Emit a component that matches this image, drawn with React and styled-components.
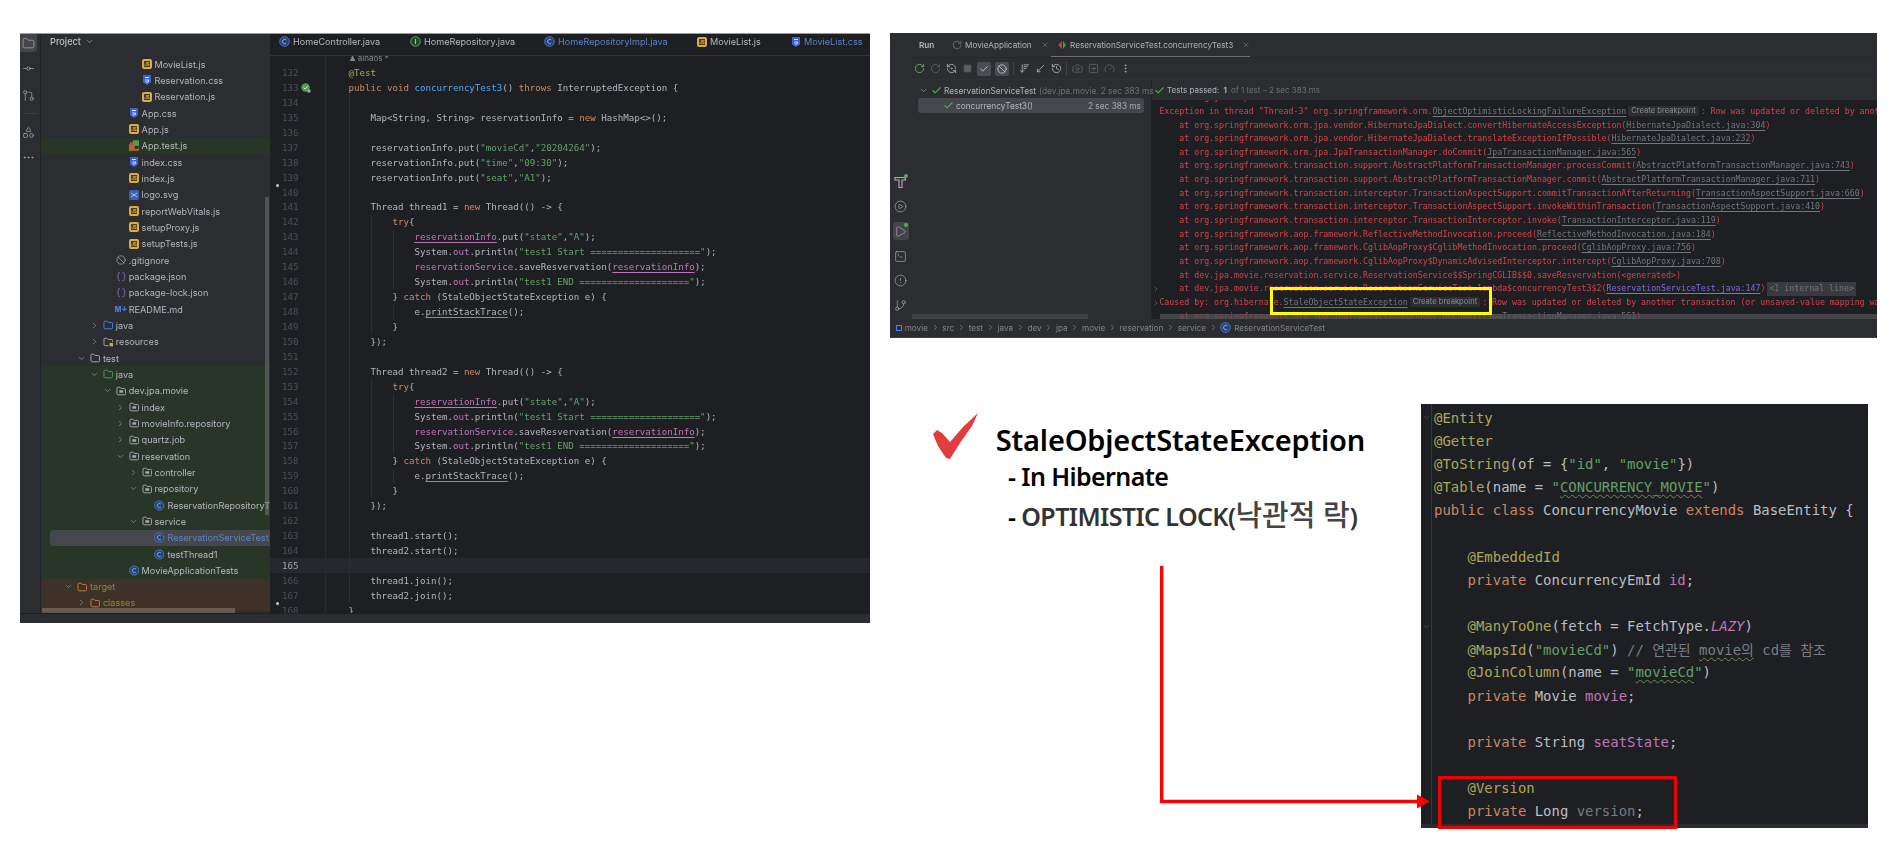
import React from "react";
import styled, { createGlobalStyle } from "styled-components";
import {
  Folder,
  GitCommitHorizontal,
  GitPullRequest,
  Shapes,
  Ellipsis,
  ChevronDown,
  ChevronRight,
  Ban,
  Braces,
  RotateCw,
  RefreshCcwDot,
  Check,
  Square,
  ArrowDownWideNarrow,
  MoveDownLeft,
  History,
  Camera,
  SquareArrowRight,
  Gauge,
  EllipsisVertical,
  CirclePlay,
  Play,
  SquareTerminal,
  CircleAlert,
  GitBranch,
  X,
} from "lucide-react";

const UI = `Inter, "Noto Sans", sans-serif`;
const MONO = `"DejaVu Sans Mono", "Noto Sans CJK KR", monospace`;

const GlobalStyle = createGlobalStyle`
  html, body {
    margin: 0;
    background: #fff;
    overflow: hidden;
  }
`;

const Page = styled.div`
  width: 1892px;
  height: 844px;
  box-sizing: border-box;
  padding: 33px 0 0 20px;
  display: flex;
  gap: 20px;
  align-items: flex-start;
  overflow: hidden;
  background: #fff;
`;

/* ---------- left screenshot ---------- */

const LeftShot = styled.div`
  width: 850px;
  height: 590px;
  display: flex;
  flex-direction: column;
  background: #2b2d30;
  border-top: 1px solid #9a9b9d;
  box-sizing: border-box;
  filter: blur(0.4px);
  font-family: ${UI};
  overflow: hidden;
`;

const LeftBody = styled.div`
  flex: 1;
  min-height: 0;
  display: flex;
`;

const LeftStatus = styled.div`
  height: 9px;
  background: #2b2d30;
  border-top: 1px solid #1e1f22;
`;

const ActivityBar = styled.div`
  width: 20px;
  border-right: 1px solid #232427;
  display: flex;
  flex-direction: column;
  align-items: center;
  color: #b4b6bc;
  svg {
    display: block;
  }
`;

const ActivityButton = styled.div`
  width: 17px;
  height: ${(p) => p.$h || 17}px;
  margin-bottom: ${(p) => p.$mb || 0}px;
  margin-right: 3px;
  display: flex;
  align-items: center;
  justify-content: center;
  border-radius: 0 0 4px 0;
  background: ${(p) => (p.$active ? "#43454a" : "transparent")};
`;

const ActivityRule = styled.div`
  width: 14px;
  height: 1px;
  background: #3c3e42;
  margin-bottom: 10px;
`;

const ProjectPanel = styled.div`
  position: relative;
  width: 229px;
  display: flex;
  flex-direction: column;
  overflow: hidden;
  background: #2b2d30;
`;

const PanelHeader = styled.div`
  height: 15px;
  padding-bottom: 7px;
  flex: none;
  padding-left: 9px;
  display: flex;
  align-items: center;
  gap: 4px;
  font-size: 9.2px;
  font-weight: 500;
  color: #bfc1c6;
`;

const TreeRow = styled.div`
  height: 16.33px;
  flex: none;
  display: flex;
  align-items: center;
  box-sizing: border-box;
  padding-left: ${(p) => 23 + p.$level * 12.9}px;
  background: ${(p) =>
    p.$tone === "green" ? "#283628" : p.$tone === "brown" ? "#3e3228" : "transparent"};
  white-space: nowrap;
  position: relative;
`;

const RowSelect = styled.div`
  position: absolute;
  left: 9px;
  right: 0;
  top: 0;
  bottom: 0;
  border-radius: 4px 0 0 4px;
  background: #45474c;
`;

const TreeChevron = styled.span`
  position: relative;
  width: 13px;
  flex: none;
  display: flex;
  color: #8d8f95;
`;

const TreeIconBox = styled.span`
  position: relative;
  width: 10.5px;
  height: 11px;
  flex: none;
  margin-right: 2.5px;
  display: flex;
  align-items: center;
  justify-content: center;
`;

const TreeLabel = styled.span`
  position: relative;
  font-size: 9.15px;
  color: ${(p) => p.$color || "#b6b8be"};
`;

const VScroll = styled.div`
  position: absolute;
  right: 1px;
  top: 163px;
  height: 318px;
  width: 4px;
  background: rgba(120, 122, 126, 0.5);
`;

const HScroll = styled.div`
  position: absolute;
  left: 1px;
  bottom: 0;
  width: 193px;
  height: 5px;
  background: rgba(150, 145, 130, 0.45);
`;

const Editor = styled.div`
  position: relative;
  flex: 1;
  min-width: 0;
  display: flex;
  flex-direction: column;
  background: #1e1f22;
`;

const TabBar = styled.div`
  height: 21px;
  flex: none;
  position: relative;
  border-bottom: 1px solid #313338;
`;

const EditorTab = styled.div`
  position: absolute;
  top: 0;
  height: 15px;
  left: ${(p) => p.$x}px;
  display: flex;
  align-items: center;
  gap: 3px;
  font-size: 9.1px;
  white-space: nowrap;
  color: ${(p) => p.$color || "#b6b8be"};
`;

const CodeClip = styled.div`
  flex: 1;
  min-height: 0;
  overflow: hidden;
`;

const CodeList = styled.div`
  margin-top: -5.4px;
  font-family: ${MONO};
  font-size: 9.15px;
  color: #b4b6bc;
`;

const CodeRow = styled.div`
  height: 14.94px;
  display: flex;
  align-items: center;
  background: ${(p) => (p.$current ? "#26282d" : "transparent")};
`;

const LineNo = styled.div`
  width: 56px;
  height: 100%;
  flex: none;
  box-sizing: border-box;
  padding-left: 12px;
  display: flex;
  align-items: center;
  gap: 3px;
  border-right: 1px solid #2a2b2f;
  color: ${(p) => (p.$current ? "#a1a3ab" : "#4b5059")};
`;

const LineCode = styled.div`
  flex: 1;
  height: 100%;
  display: flex;
  align-items: center;
  padding-left: 22.5px;
  white-space: pre;
  background-image: repeating-linear-gradient(
    90deg,
    #2c2d31 0,
    #2c2d31 1px,
    transparent 1px,
    transparent 22.04px
  );
  background-repeat: no-repeat;
  background-position: 22.5px 0;
  background-size: ${(p) => (p.$depth || 0) * 22.04}px 100%;
`;

const Tok = styled.span`
  color: ${(p) =>
    ({
      k: "#c9886a",
      s: "#63a06c",
      a: "#ada85c",
      f: "#c077b5",
      m: "#56a8f5",
      h: "#85878d",
      d: "#7a7e85",
      v: "#787a80",
      p: "#b4b6bc",
    })[p.$k]};
  font-style: ${(p) => (p.$italic ? "italic" : "normal")};
  font-family: ${(p) => (p.$k === "h" ? UI : "inherit")};
  font-size: ${(p) => (p.$k === "h" ? "8px" : "inherit")};
  text-decoration: ${(p) => (p.$line ? `underline ${p.$line}` : "none")};
  text-underline-offset: 2px;
`;

const Wavy = styled.span`
  text-decoration: underline wavy #6e8a4e 1px;
  text-underline-offset: 2px;
  color: ${(p) => p.$color || "inherit"};
`;

const GutterDot = styled.div`
  position: absolute;
  left: 6px;
  top: ${(p) => p.$y}px;
  width: 3px;
  height: 3px;
  border-radius: 50%;
  background: #c8c9cc;
`;

/* ---------- right column ---------- */

const RightColumn = styled.div`
  width: 987px;
  display: flex;
  flex-direction: column;
  gap: 66px;
`;

const RunShot = styled.div`
  position: relative;
  height: 305px;
`;

const RunInner = styled.div`
  height: 100%;
  display: flex;
  flex-direction: column;
  background: #2b2d30;
  font-family: ${UI};
  filter: blur(0.35px);
  overflow: hidden;
`;

const RunBody = styled.div`
  flex: 1;
  min-height: 0;
  display: flex;
`;

const ToolStrip = styled.div`
  width: 21px;
  flex: none;
  display: flex;
  flex-direction: column;
  align-items: center;
  padding-top: 140px;
  box-sizing: border-box;
  gap: 6.7px;
  color: #b0b2b8;
`;

const StripButton = styled.div`
  position: relative;
  width: 16px;
  height: 18px;
  flex: none;
  display: flex;
  align-items: center;
  justify-content: center;
  border-radius: 3px;
  background: ${(p) => (p.$active ? "#43454a" : "transparent")};
`;

const StatusDot = styled.span`
  position: absolute;
  right: 1px;
  top: 1px;
  width: 4px;
  height: 4px;
  border-radius: 50%;
  background: #57a65c;
`;

const RunMain = styled.div`
  flex: 1;
  min-width: 0;
  display: flex;
  flex-direction: column;
`;

const RunTabs = styled.div`
  position: relative;
  height: 25px;
  flex: none;
  border-bottom: 1px solid #26272a;
  box-sizing: border-box;
  font-size: 8.2px;
  color: #b2b4ba;
`;

const RunTab = styled.div`
  position: absolute;
  left: ${(p) => p.$x}px;
  top: 0;
  height: 100%;
  display: flex;
  align-items: center;
  gap: 3px;
  font-weight: ${(p) => p.$weight || 400};
  color: ${(p) => p.$color || "#b2b4ba"};
  white-space: nowrap;
`;

const RunTabLine = styled.div`
  position: absolute;
  left: 140px;
  width: 199px;
  bottom: 0;
  height: 1.5px;
  background: #6e7075;
`;

const RunToolbar = styled.div`
  height: 22px;
  flex: none;
  box-sizing: border-box;
  display: flex;
  align-items: center;
  padding-left: 2px;
  gap: 4px;
  border-bottom: 1px solid #2f3134;
`;

const ToolButton = styled.div`
  width: 12px;
  height: 14px;
  display: flex;
  align-items: center;
  justify-content: center;
  border-radius: 2px;
  color: ${(p) => p.$color || "#a7a9af"};
  ${(p) =>
    p.$active &&
    `
    width: 14px;
    background: #4a4c51;
    color: #c9cbd0;
  `}
`;

const ToolSep = styled.div`
  width: 1px;
  height: 13px;
  background: #424448;
`;

const RunPanes = styled.div`
  flex: 1;
  min-height: 0;
  display: flex;
`;

const TestPane = styled.div`
  position: relative;
  width: 241px;
  flex: none;
  padding-top: 3px;
  font-size: 8.3px;
  border-right: 1px solid #232427;
  box-sizing: border-box;
`;

const TestRow = styled.div`
  position: relative;
  height: 15px;
  margin-left: 7px;
  width: 226px;
  box-sizing: border-box;
  padding-left: ${(p) => p.$pad}px;
  padding-right: 3px;
  display: flex;
  align-items: center;
  gap: 2px;
  white-space: nowrap;
  color: #b4b6bc;
  border-radius: 3px;
  background: ${(p) => (p.$selected ? "#45474c" : "transparent")};
  svg {
    flex: none;
  }
`;

const Muted = styled.span`
  color: #6f7177;
  margin-left: ${(p) => p.$ml || 0}px;
`;

const RowTime = styled.span`
  margin-left: auto;
  color: ${(p) => p.$color || "#6f7177"};
`;

const PaneScroll = styled.div`
  position: absolute;
  left: 1px;
  bottom: 0;
  width: 176px;
  height: 5px;
  background: #3f4145;
`;

const ConsolePane = styled.div`
  position: relative;
  flex: 1;
  min-width: 0;
  display: flex;
  flex-direction: column;
  overflow: hidden;
`;

const ConsoleHead = styled.div`
  height: 20px;
  flex: none;
  padding-left: 2px;
  display: flex;
  align-items: center;
  gap: 2px;
  font-size: 8px;
  color: #b4b6bc;
  white-space: pre;
`;

const ConsoleBody = styled.div`
  flex: 1;
  min-height: 0;
  overflow: hidden;
  background: #1e1f22;
  font-family: ${MONO};
  font-size: 8.26px;
  color: #d2434c;
`;

const ConsoleList = styled.div`
  margin-top: -8.8px;
`;

const ConsoleLine = styled.div`
  position: relative;
  height: 13.67px;
  line-height: 13.67px;
  padding-left: ${(p) => (p.$at ? 27.3 : 7.4)}px;
  white-space: pre;
`;

const Fold = styled.span`
  position: absolute;
  left: 0;
  top: 3px;
  display: flex;
  color: #707277;
`;

const Link = styled.span`
  color: ${(p) => p.$color || "#72757b"};
  text-decoration: underline;
  text-underline-offset: 1.5px;
`;

const Pill = styled.span`
  display: inline-block;
  height: 10px;
  line-height: 10px;
  margin: 0 2px;
  padding: 0 3px;
  font-family: ${UI};
  font-size: 7.6px;
  color: #8b8d93;
  background: #2b2d30;
  border-radius: 2px;
  vertical-align: 1px;
`;

const Collapsed = styled.span`
  display: inline-block;
  height: 14px;
  padding: 0 2px;
  margin-left: 2px;
  color: #72757b;
  background: #393b40;
`;

const ConsoleScroll = styled.div`
  position: absolute;
  left: 8px;
  right: 0;
  bottom: 0;
  height: 5px;
  background: rgba(82, 84, 88, 0.75);
`;

const Breadcrumbs = styled.div`
  height: 19.5px;
  flex: none;
  padding-left: 6px;
  display: flex;
  align-items: center;
  gap: 2.7px;
  font-size: 8.2px;
  color: #83858b;
  border-bottom: 1px solid #3a3c40;
  box-sizing: border-box;
  white-space: nowrap;
`;

const BlueSquare = styled.span`
  width: 4px;
  height: 4px;
  border: 1px solid #4f82e0;
`;

const YellowBox = styled.div`
  position: absolute;
  left: 380px;
  top: 253.5px;
  width: 222px;
  height: 28px;
  box-sizing: border-box;
  border: 3px solid #ffff00;
`;

/* ---------- lower area ---------- */

const LowerRow = styled.div`
  position: relative;
  height: 424px;
  display: flex;
  padding-left: 43px;
`;

const Notes = styled.div`
  width: 488px;
  flex: none;
  display: flex;
  align-items: flex-start;
  gap: 17.7px;
`;

const BrushCheck = styled.svg`
  width: 45px;
  height: 46px;
  flex: none;
  margin-top: 9px;
`;

const NoteText = styled.div`
  padding-top: 18px;
  font-family: "Noto Sans", "Noto Sans CJK KR", sans-serif;
  font-weight: 600;
  color: #000;
  white-space: nowrap;
`;

const NoteTitle = styled.div`
  height: 36px;
  line-height: 36px;
  font-size: 29px;
  letter-spacing: -0.17px;
`;

const NoteItem = styled.div`
  height: 36px;
  line-height: 36px;
  padding-left: 12.3px;
  font-size: 25px;
  letter-spacing: -0.6px;
  margin-top: ${(p) => p.$mt || 0}px;
  color: ${(p) => p.$color || "#000"};
`;

const Dash = styled.span`
  color: #000;
`;

const Hangul = styled.span`
  font-size: 29px;
  font-weight: 500;
  letter-spacing: 0;
  color: #444;
`;

const RedArrow = styled.svg`
  position: absolute;
  left: 270px;
  top: 161px;
  width: 272px;
  height: 246px;
  z-index: 2;
`;

const EntityShot = styled.div`
  position: relative;
  width: 447px;
  height: 424px;
  flex: none;
  display: flex;
  flex-direction: column;
  background: #1e1f22;
  font-family: ${MONO};
  font-size: 13.95px;
  color: #bcbec4;
`;

const EntityCode = styled.div`
  flex: 1;
  padding-top: 2.2px;
  background: linear-gradient(#35373b, #35373b) 10px 0 / 1px 100% no-repeat;
`;

const EntityRow = styled.div`
  height: 23.17px;
  display: flex;
  align-items: center;
  white-space: pre;
`;

const EntityFold = styled.span`
  width: 13px;
  flex: none;
  display: flex;
  color: #4e5157;
  padding-left: 1px;
  box-sizing: border-box;
`;

const EntityFoot = styled.div`
  height: 4.5px;
  flex: none;
  background: #2b2d30;
`;

const RedBox = styled.div`
  position: absolute;
  left: 17px;
  top: 371.5px;
  width: 239px;
  height: 53.5px;
  box-sizing: border-box;
  border: 3px solid #f00000;
  z-index: 3;
`;

/* ---------- icons ---------- */

const JsIcon = ({ size = 10 }) => (
  <svg width={size} height={size} viewBox="0 0 10 10">
    <rect width="10" height="10" rx="2" fill="#d8ab4b" />
    <rect x="2" y="2" width="6" height="6" fill="#4a3c1e" />
    <text x="5" y="7.2" fontSize="4.6" fontFamily="Inter" fontWeight="700" textAnchor="middle" fill="#d8ab4b">
      JS
    </text>
  </svg>
);

const CssIcon = ({ size = 10 }) => (
  <svg width={size} height={size} viewBox="0 0 10 10">
    <path d="M1 0h8v7.5L5 10 1 7.5z" fill="#3b62d6" />
    <path d="M3 2.5h4M3.4 5h3.2v1.5L5 7.3 3.4 6.5" stroke="#dfe6fb" strokeWidth="1" fill="none" />
  </svg>
);

const ClassIcon = ({ size = 11 }) => (
  <svg width={size} height={size} viewBox="0 0 11 11">
    <circle cx="5.5" cy="5.5" r="4.8" fill="#27406f" stroke="#4a78c8" strokeWidth="1" />
    <path d="M7.2 3.9a2.2 2.2 0 1 0 0 3.2" fill="none" stroke="#8fb1ea" strokeWidth="1" />
  </svg>
);

const InterfaceIcon = () => (
  <svg width="11" height="11" viewBox="0 0 11 11">
    <circle cx="5.5" cy="5.5" r="4.8" fill="#2a452d" stroke="#57a65c" strokeWidth="1" />
    <path d="M5.5 3v5" stroke="#8fca94" strokeWidth="1" />
  </svg>
);

const SvgFileIcon = () => (
  <svg width="10" height="10" viewBox="0 0 10 10">
    <rect width="10" height="10" rx="2" fill="#3a62b0" />
    <path d="M2 3l3 2-3 2M8 3L5 5l3 2" stroke="#b9cdf2" strokeWidth="0.9" fill="none" />
  </svg>
);

const TestJsIcon = () => (
  <svg width="11" height="11" viewBox="0 0 11 11">
    <rect y="4" width="11" height="7" fill="#b4692e" />
    <rect x="4" width="7" height="5" fill="#4e9a5a" />
    <rect x="1" y="2" width="3" height="3" fill="#c4473f" />
    <rect x="6" y="6" width="4" height="3" fill="#2d2d2d" />
  </svg>
);

const BuildIcon = () => (
  <svg width="13" height="13" viewBox="0 0 13 13" fill="none" stroke="currentColor" strokeWidth="1.1">
    <path d="M1 1.5h9.5l1 1.5v1H8v7.5H5V4H1z" />
  </svg>
);

const MdIcon = styled.span`
  font-size: 7px;
  font-weight: 800;
  letter-spacing: -0.4px;
  color: #4f82d8;
  white-space: nowrap;
`;

const PackageIcon = ({ color = "#a6a8ad" }) => (
  <svg width="11" height="10" viewBox="0 0 11 10" fill="none" stroke={color} strokeWidth="1">
    <path d="M1 2.2q0-1.2 1.2-1.2h1.9l1.2 1.3h3.5q1.2 0 1.2 1.2v4.3q0 1.2-1.2 1.2H2.2Q1 8.8 1 7.6z" />
    <rect x="3.5" y="4.2" width="4" height="2.6" fill={color} stroke="none" />
  </svg>
);

const PlainFolder = ({ color = "#a6a8ad" }) => (
  <svg width="11" height="10" viewBox="0 0 11 10" fill="none" stroke={color} strokeWidth="1">
    <path d="M1 2.2q0-1.2 1.2-1.2h1.9l1.2 1.3h3.5q1.2 0 1.2 1.2v4.3q0 1.2-1.2 1.2H2.2Q1 8.8 1 7.6z" />
  </svg>
);

const ResourceFolder = () => (
  <svg width="11" height="10" viewBox="0 0 11 10" fill="none" stroke="#a6a8ad" strokeWidth="1">
    <path d="M1 2.2q0-1.2 1.2-1.2h1.9l1.2 1.3h3.5q1.2 0 1.2 1.2v1.5M6 8.8H2.2Q1 8.8 1 7.6V2.2" />
    <rect x="7" y="6" width="3.5" height="3.5" fill="#d8ab4b" stroke="none" />
  </svg>
);

const treeIcons = {
  js: <JsIcon />,
  css: <CssIcon />,
  svg: <SvgFileIcon />,
  test: <TestJsIcon />,
  ignore: <Ban size={10} color="#9a9ca1" />,
  json: <Braces size={11} color="#8c6fc0" />,
  md: <MdIcon>M↓</MdIcon>,
  srcBlue: <PlainFolder color="#4f82d8" />,
  res: <ResourceFolder />,
  folder: <PlainFolder />,
  srcGreen: <PlainFolder color="#4f9a57" />,
  pkg: <PackageIcon />,
  cls: <ClassIcon />,
  orange: <PlainFolder color="#c77b4a" />,
};

const GreenCheck = ({ size = 11 }) => <Check size={size} strokeWidth={2.4} color="#57a65c" />;

/* ---------- data ---------- */

const tree = [
  { l: 5, n: "MovieList.js", i: "js" },
  { l: 5, n: "Reservation.css", i: "css" },
  { l: 5, n: "Reservation.js", i: "js" },
  { l: 4, n: "App.css", i: "css" },
  { l: 4, n: "App.js", i: "js" },
  { l: 4, n: "App.test.js", i: "test", t: "green" },
  { l: 4, n: "index.css", i: "css" },
  { l: 4, n: "index.js", i: "js" },
  { l: 4, n: "logo.svg", i: "svg" },
  { l: 4, n: "reportWebVitals.js", i: "js" },
  { l: 4, n: "setupProxy.js", i: "js" },
  { l: 4, n: "setupTests.js", i: "js" },
  { l: 3, n: ".gitignore", i: "ignore" },
  { l: 3, n: "package.json", i: "json" },
  { l: 3, n: "package-lock.json", i: "json" },
  { l: 3, n: "README.md", i: "md" },
  { l: 2, n: "java", i: "srcBlue", c: "r" },
  { l: 2, n: "resources", i: "res", c: "r" },
  { l: 1, n: "test", i: "folder", c: "d" },
  { l: 2, n: "java", i: "srcGreen", c: "d", t: "green" },
  { l: 3, n: "dev.jpa.movie", i: "pkg", c: "d", t: "green" },
  { l: 4, n: "index", i: "pkg", c: "r", t: "green" },
  { l: 4, n: "movieInfo.repository", i: "pkg", c: "r", t: "green" },
  { l: 4, n: "quartz.job", i: "pkg", c: "r", t: "green" },
  { l: 4, n: "reservation", i: "pkg", c: "d", t: "green" },
  { l: 5, n: "controller", i: "pkg", c: "r", t: "green" },
  { l: 5, n: "repository", i: "pkg", c: "d", t: "green" },
  { l: 6, n: "ReservationRepositoryTest", i: "cls", t: "green" },
  { l: 5, n: "service", i: "pkg", c: "d", t: "green" },
  { l: 6, n: "ReservationServiceTest", i: "cls", t: "green", sel: true, color: "#5f83c4" },
  { l: 6, n: "testThread1", i: "cls", t: "green" },
  { l: 4, n: "MovieApplicationTests", i: "cls", t: "green" },
  { l: 0, n: "target", i: "orange", c: "d", t: "brown", color: "#8f8a2c" },
  { l: 1, n: "classes", i: "orange", c: "r", t: "brown", color: "#8f8a2c" },
];

const threadBlock = (name) => [
  {
    d: 1,
    c: (
      <>
        {"    Thread " + name + " = "}
        <Tok $k="k">new</Tok>
        {" Thread(() -> {"}
      </>
    ),
  },
  {
    d: 2,
    c: (
      <>
        {"        "}
        <Tok $k="k">try</Tok>
        {"{"}
      </>
    ),
  },
  {
    d: 3,
    c: (
      <>
        {"            "}
        <Tok $k="f" $line="#c077b5">reservationInfo</Tok>
        {".put("}
        <Tok $k="s">"state"</Tok>,<Tok $k="s">"A"</Tok>
        {");"}
      </>
    ),
  },
  {
    d: 3,
    c: (
      <>
        {"            System."}
        <Tok $k="f">out</Tok>
        {".println("}
        <Tok $k="s">"test1 Start ===================="</Tok>
        {");"}
      </>
    ),
  },
  {
    d: 3,
    c: (
      <>
        {"            "}
        <Tok $k="f">reservationService</Tok>
        {".saveResvervation("}
        <Tok $k="f" $line="#c077b5">reservationInfo</Tok>
        {");"}
      </>
    ),
  },
  {
    d: 3,
    c: (
      <>
        {"            System."}
        <Tok $k="f">out</Tok>
        {".println("}
        <Tok $k="s">"test1 END ===================="</Tok>
        {");"}
      </>
    ),
  },
  {
    d: 2,
    c: (
      <>
        {"        } "}
        <Tok $k="k">catch</Tok>
        {" (StaleObjectStateException e) {"}
      </>
    ),
  },
  {
    d: 3,
    c: (
      <>
        {"            e."}
        <Tok $k="p" $line="#a8903c">printStackTrace</Tok>
        {"();"}
      </>
    ),
  },
  { d: 2, c: "        }" },
  { d: 1, c: "    });" },
];

const editorLines = [
  {
    c: <Tok $k="a">@Test</Tok>,
  },
  {
    run: true,
    c: (
      <>
        <Tok $k="k">public void </Tok>
        <Tok $k="m">concurrencyTest3</Tok>
        {"() "}
        <Tok $k="k">throws</Tok>
        {" InterruptedException {"}
      </>
    ),
  },
  { d: 1, c: "" },
  {
    d: 1,
    c: (
      <>
        {"    Map<String, String> reservationInfo = "}
        <Tok $k="k">new</Tok>
        {" HashMap<>();"}
      </>
    ),
  },
  { d: 1, c: "" },
  {
    d: 1,
    c: (
      <>
        {"    reservationInfo.put("}
        <Tok $k="s">"movieCd"</Tok>,<Tok $k="s">"20204264"</Tok>
        {");"}
      </>
    ),
  },
  {
    d: 1,
    c: (
      <>
        {"    reservationInfo.put("}
        <Tok $k="s">"time"</Tok>,<Tok $k="s">"09:30"</Tok>
        {");"}
      </>
    ),
  },
  {
    d: 1,
    c: (
      <>
        {"    reservationInfo.put("}
        <Tok $k="s">"seat"</Tok>,<Tok $k="s">"A1"</Tok>
        {");"}
      </>
    ),
  },
  { d: 1, c: "" },
  ...threadBlock("thread1"),
  { d: 1, c: "" },
  ...threadBlock("thread2"),
  { d: 1, c: "" },
  { d: 1, c: "    thread1.start();" },
  { d: 1, c: "    thread2.start();" },
  { d: 1, c: "" },
  { d: 1, c: "    thread1.join();" },
  { d: 1, c: "    thread2.join();" },
  { c: "}" },
];

const stack = [
  ["org.springframework.orm.jpa.vendor.HibernateJpaDialect.convertHibernateAccessException(", "HibernateJpaDialect.java:304"],
  ["org.springframework.orm.jpa.vendor.HibernateJpaDialect.translateExceptionIfPossible(", "HibernateJpaDialect.java:232"],
  ["org.springframework.orm.jpa.JpaTransactionManager.doCommit(", "JpaTransactionManager.java:565"],
  ["org.springframework.transaction.support.AbstractPlatformTransactionManager.processCommit(", "AbstractPlatformTransactionManager.java:743"],
  ["org.springframework.transaction.support.AbstractPlatformTransactionManager.commit(", "AbstractPlatformTransactionManager.java:711"],
  ["org.springframework.transaction.interceptor.TransactionAspectSupport.commitTransactionAfterReturning(", "TransactionAspectSupport.java:660"],
  ["org.springframework.transaction.interceptor.TransactionAspectSupport.invokeWithinTransaction(", "TransactionAspectSupport.java:410"],
  ["org.springframework.transaction.interceptor.TransactionInterceptor.invoke(", "TransactionInterceptor.java:119"],
  ["org.springframework.aop.framework.ReflectiveMethodInvocation.proceed(", "ReflectiveMethodInvocation.java:184"],
  ["org.springframework.aop.framework.CglibAopProxy$CglibMethodInvocation.proceed(", "CglibAopProxy.java:756"],
  ["org.springframework.aop.framework.CglibAopProxy$DynamicAdvisedInterceptor.intercept(", "CglibAopProxy.java:708"],
];

const crumbs = ["src", "test", "java", "dev", "jpa", "movie", "reservation", "service"];

const Sep = () => <ChevronRight size={9} color="#83858b" />;

const entityLines = [
  { fold: true, c: <Tok $k="a">@Entity</Tok> },
  { c: <Tok $k="a">@Getter</Tok> },
  {
    c: (
      <>
        <Tok $k="a">@ToString</Tok>
        {"(of = {"}
        <Tok $k="s">"id"</Tok>
        {", "}
        <Tok $k="s">"movie"</Tok>
        {"})"}
      </>
    ),
  },
  {
    c: (
      <>
        <Tok $k="a">@Table</Tok>
        {"(name = "}
        <Tok $k="s">
          "<Wavy>CONCURRENCY_MOVIE</Wavy>"
        </Tok>
        {")"}
      </>
    ),
  },
  {
    c: (
      <>
        <Tok $k="k">public class </Tok>
        {"ConcurrencyMovie "}
        <Tok $k="k">extends </Tok>
        {"BaseEntity {"}
      </>
    ),
  },
  { c: "" },
  { c: <Tok $k="a">{"    @EmbeddedId"}</Tok> },
  {
    c: (
      <>
        <Tok $k="k">{"    private "}</Tok>
        {"ConcurrencyEmId "}
        <Tok $k="f">id</Tok>;
      </>
    ),
  },
  { c: "" },
  {
    fold: true,
    c: (
      <>
        <Tok $k="a">{"    @ManyToOne"}</Tok>
        {"(fetch = FetchType."}
        <Tok $k="f" $italic>LAZY</Tok>
        {")"}
      </>
    ),
  },
  {
    c: (
      <>
        <Tok $k="a">{"    @MapsId"}</Tok>
        {"("}
        <Tok $k="s">"movieCd"</Tok>
        {") "}
        <Tok $k="d">
          {"// 연관된 "}
          <Wavy>movie의</Wavy>
          {" cd를 참조"}
        </Tok>
      </>
    ),
  },
  {
    c: (
      <>
        <Tok $k="a">{"    @JoinColumn"}</Tok>
        {"(name = "}
        <Tok $k="s">
          "<Wavy>movieCd</Wavy>"
        </Tok>
        {")"}
      </>
    ),
  },
  {
    c: (
      <>
        <Tok $k="k">{"    private "}</Tok>
        {"Movie "}
        <Tok $k="f">movie</Tok>;
      </>
    ),
  },
  { c: "" },
  {
    c: (
      <>
        <Tok $k="k">{"    private "}</Tok>
        {"String "}
        <Tok $k="f">seatState</Tok>;
      </>
    ),
  },
  { c: "" },
  { c: <Tok $k="a">{"    @Version"}</Tok> },
  {
    c: (
      <>
        <Tok $k="k">{"    private "}</Tok>
        {"Long "}
        <Tok $k="v">version</Tok>;
      </>
    ),
  },
];

export default function App() {
  return (
    <Page>
      <GlobalStyle />

      <LeftShot>
        <LeftBody>
          <ActivityBar>
            <ActivityButton $active $h={18} $mb={7.5}>
              <Folder size={13} strokeWidth={1.2} />
            </ActivityButton>
            <ActivityButton $mb={10}>
              <GitCommitHorizontal size={13} strokeWidth={1.2} />
            </ActivityButton>
            <ActivityButton $mb={9}>
              <GitPullRequest size={13} strokeWidth={1.2} />
            </ActivityButton>
            <ActivityRule />
            <ActivityButton $mb={8}>
              <Shapes size={13} strokeWidth={1.2} />
            </ActivityButton>
            <ActivityButton>
              <Ellipsis size={13} strokeWidth={1.4} />
            </ActivityButton>
          </ActivityBar>

          <ProjectPanel>
            <PanelHeader>
              Project
              <ChevronDown size={9} color="#9a9ca2" />
            </PanelHeader>
            {tree.map((r, i) => (
              <TreeRow key={i} $level={r.l} $tone={r.t}>
                {r.sel && <RowSelect />}
                <TreeChevron>
                  {r.c === "d" && <ChevronDown size={9} />}
                  {r.c === "r" && <ChevronRight size={9} />}
                </TreeChevron>
                <TreeIconBox>{treeIcons[r.i]}</TreeIconBox>
                <TreeLabel $color={r.color}>{r.n}</TreeLabel>
              </TreeRow>
            ))}
            <VScroll />
            <HScroll />
          </ProjectPanel>

          <Editor>
            <TabBar>
              <EditorTab $x={9}>
                <ClassIcon />
                HomeController.java
              </EditorTab>
              <EditorTab $x={140}>
                <InterfaceIcon />
                HomeRepository.java
              </EditorTab>
              <EditorTab $x={274} $color="#5f83c4">
                <ClassIcon />
                HomeRepositoryImpl.java
              </EditorTab>
              <EditorTab $x={427}>
                <JsIcon />
                MovieList.js
              </EditorTab>
              <EditorTab $x={521} $color="#5f83c4">
                <CssIcon />
                MovieList.css
              </EditorTab>
            </TabBar>
            <CodeClip>
              <CodeList>
                <CodeRow>
                  <LineNo />
                  <LineCode>
                    <Tok $k="h">♟ alhaos *</Tok>
                  </LineCode>
                </CodeRow>
                {editorLines.map((line, i) => (
                  <CodeRow key={i} $current={i + 132 === 165}>
                    <LineNo $current={i + 132 === 165}>
                      {i + 132}
                      {line.run && (
                        <svg width="10" height="10" viewBox="0 0 10 10">
                          <circle cx="4.5" cy="4.5" r="4.2" fill="#4f9a57" />
                          <path d="M2.6 4.6l1.5 1.4 2.6-2.8" stroke="#e6f3e7" strokeWidth="1" fill="none" />
                          <circle cx="8" cy="8" r="1.8" fill="#7fbf85" />
                        </svg>
                      )}
                    </LineNo>
                    <LineCode $depth={line.d}>
                      <span>{line.c}</span>
                    </LineCode>
                  </CodeRow>
                ))}
              </CodeList>
            </CodeClip>
            <GutterDot $y={150} />
            <GutterDot $y={568} />
          </Editor>
        </LeftBody>
        <LeftStatus />
      </LeftShot>

      <RightColumn>
        <RunShot>
          <RunInner>
            <RunBody>
              <ToolStrip>
                <StripButton>
                  <BuildIcon />
                  <StatusDot />
                </StripButton>
                <StripButton>
                  <CirclePlay size={13} strokeWidth={1.2} />
                </StripButton>
                <StripButton $active>
                  <Play size={13} strokeWidth={1.2} />
                  <StatusDot />
                </StripButton>
                <StripButton>
                  <SquareTerminal size={13} strokeWidth={1.2} />
                </StripButton>
                <StripButton>
                  <CircleAlert size={13} strokeWidth={1.2} />
                </StripButton>
                <StripButton>
                  <GitBranch size={13} strokeWidth={1.2} />
                </StripButton>
              </ToolStrip>
              <RunMain>
                <RunTabs>
                  <RunTab $x={8} $weight={500} $color="#c9cbd0">
                    Run
                  </RunTab>
                  <RunTab $x={41}>
                    <RotateCw size={10} color="#5b7f5e" />
                    MovieApplication
                    <X size={8} color="#6f7177" style={{ marginLeft: 6 }} />
                  </RunTab>
                  <RunTab $x={146}>
                    <svg width="10" height="10" viewBox="0 0 10 10">
                      <path d="M5 1L1 5l4 4z" fill="#a8483f" />
                      <path d="M6 1l3 4-3 4z" fill="#4f9a57" />
                    </svg>
                    ReservationServiceTest.concurrencyTest3
                    <X size={8} color="#6f7177" style={{ marginLeft: 6 }} />
                  </RunTab>
                  <RunTabLine />
                </RunTabs>
                <RunToolbar>
                  <ToolButton $color="#6f9f74">
                    <RotateCw size={11} />
                  </ToolButton>
                  <ToolButton $color="#5c5e63">
                    <RotateCw size={11} />
                  </ToolButton>
                  <ToolButton>
                    <RefreshCcwDot size={11} />
                  </ToolButton>
                  <ToolButton $color="#5c5e63">
                    <Square size={9} fill="currentColor" />
                  </ToolButton>
                  <ToolButton $active>
                    <Check size={10} />
                  </ToolButton>
                  <ToolButton $active>
                    <Ban size={10} />
                  </ToolButton>
                  <ToolSep />
                  <ToolButton>
                    <ArrowDownWideNarrow size={11} />
                  </ToolButton>
                  <ToolButton>
                    <MoveDownLeft size={11} />
                  </ToolButton>
                  <ToolButton>
                    <History size={11} />
                  </ToolButton>
                  <ToolSep />
                  <ToolButton $color="#5c5e63">
                    <Camera size={11} />
                  </ToolButton>
                  <ToolButton $color="#5c5e63">
                    <SquareArrowRight size={11} />
                  </ToolButton>
                  <ToolButton $color="#5c5e63">
                    <Gauge size={11} />
                  </ToolButton>
                  <ToolButton>
                    <EllipsisVertical size={11} />
                  </ToolButton>
                </RunToolbar>
                <RunPanes>
                  <TestPane>
                    <TestRow $pad={1}>
                      <ChevronDown size={9} color="#8d8f95" style={{ marginRight: 1 }} />
                      <GreenCheck />
                      ReservationServiceTest
                      <Muted $ml={1}>(dev.jpa.movie.</Muted>
                      <RowTime>2 sec 383 ms</RowTime>
                    </TestRow>
                    <TestRow $pad={25} $selected>
                      <GreenCheck />
                      concurrencyTest3()
                      <RowTime $color="#a7a9af">2 sec 383 ms</RowTime>
                    </TestRow>
                    <PaneScroll />
                  </TestPane>
                  <ConsolePane>
                    <ConsoleHead>
                      <GreenCheck />
                      <span>Tests passed: </span>
                      <strong style={{ fontWeight: 600 }}>1 </strong>
                      <Muted>of 1 test – 2 sec 383 ms</Muted>
                    </ConsoleHead>
                    <ConsoleBody>
                      <ConsoleList>
                        <ConsoleLine $at>at org.junit.platform.launcher.core</ConsoleLine>
                        <ConsoleLine>
                          {'Exception in thread "Thread-3" org.springframework.orm.'}
                          <Link>ObjectOptimisticLockingFailureException</Link>
                          <Pill>Create breakpoint</Pill>
                          {": Row was updated or deleted by another transaction"}
                        </ConsoleLine>
                        {stack.map(([text, link]) => (
                          <ConsoleLine $at key={text}>
                            {"at " + text}
                            <Link>{link}</Link>)
                          </ConsoleLine>
                        ))}
                        <ConsoleLine $at>
                          {"at dev.jpa.movie.reservation.service.ReservationService$$SpringCGLIB$$0.saveResvervation(<generated>)"}
                        </ConsoleLine>
                        <ConsoleLine $at>
                          <Fold>
                            <ChevronRight size={8} />
                          </Fold>
                          {"at dev.jpa.movie.reservation.service.ReservationServiceTest.lambda$concurrencyTest3$2("}
                          <Link $color="#7f6fd6">ReservationServiceTest.java:147</Link>)
                          <Collapsed>{"<1 internal line>"}</Collapsed>
                        </ConsoleLine>
                        <ConsoleLine>
                          <Fold>
                            <ChevronRight size={8} />
                          </Fold>
                          {"Caused by: org.hibernate."}
                          <Link>StaleObjectStateException</Link>
                          <Pill>Create breakpoint</Pill>
                          {": Row was updated or deleted by another transaction (or unsaved-value mapping was incorrect)"}
                        </ConsoleLine>
                        <ConsoleLine $at>
                          {"at org.springframework.orm.jpa.JpaTransactionManager.doCommit("}
                          <Link>JpaTransactionManager.java:561</Link>)
                        </ConsoleLine>
                      </ConsoleList>
                    </ConsoleBody>
                    <ConsoleScroll />
                  </ConsolePane>
                </RunPanes>
              </RunMain>
            </RunBody>
            <Breadcrumbs>
              <BlueSquare />
              <span>movie</span>
              <Sep />
              {crumbs.map((c) => (
                <React.Fragment key={c}>
                  <span>{c}</span>
                  <Sep />
                </React.Fragment>
              ))}
              <ClassIcon />
              <span>ReservationServiceTest</span>
            </Breadcrumbs>
          </RunInner>
          <YellowBox />
        </RunShot>

        <LowerRow>
          <Notes>
            <BrushCheck viewBox="0 0 45 46">
              <path
                d="M0 21L4 17L9 20L17 29L30 14L45 0L39 13L27 30L17 46L13 45L5 33Z"
                fill="#e03e3e"
              />
            </BrushCheck>
            <NoteText>
              <NoteTitle>StaleObjectStateException</NoteTitle>
              <NoteItem>- In Hibernate</NoteItem>
              <NoteItem $mt={2.7} $color="#333">
                <Dash>- </Dash>OPTIMISTIC LOCK(<Hangul>낙관적 락</Hangul>)
              </NoteItem>
            </NoteText>
          </Notes>

          <EntityShot>
            <EntityCode>
              {entityLines.map((line, i) => (
                <EntityRow key={i}>
                  <EntityFold>{line.fold && <ChevronDown size={9} />}</EntityFold>
                  <span>{line.c}</span>
                </EntityRow>
              ))}
            </EntityCode>
            <EntityFoot />
            <RedBox />
          </EntityShot>

          <RedArrow viewBox="0 0 272 246">
            <path d="M1.7 1V236.5H259" fill="none" stroke="#ff0000" strokeWidth="3.4" />
            <path d="M257 229.5L270 236.5L257 243.5Z" fill="#ff0000" />
          </RedArrow>
        </LowerRow>
      </RightColumn>
    </Page>
  );
}
